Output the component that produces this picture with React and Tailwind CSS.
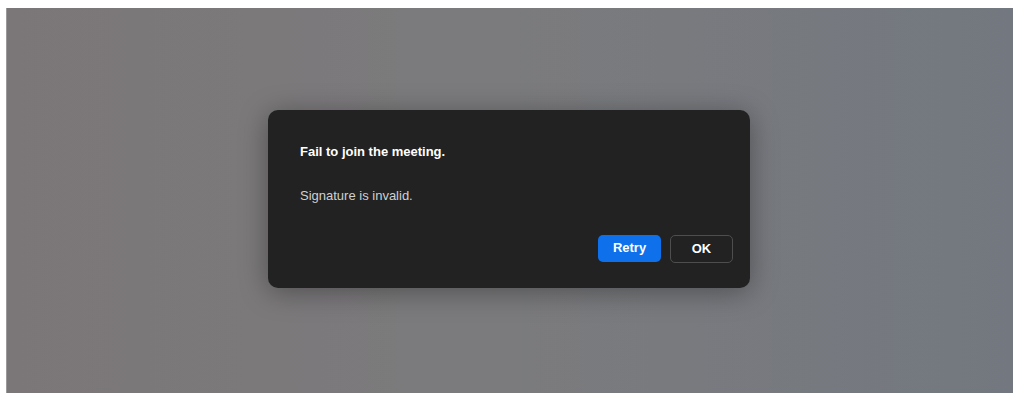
export default function App() {
  return (
    <div className="w-[1024px] h-[395px] bg-white pt-[8px] pl-[6px] pr-[11px] pb-[2px] font-['Liberation_Sans',Arial,sans-serif]">
      <div className="h-full border-l border-[#9a9a9a] bg-gradient-to-r from-[#7b7778] via-[#7b7b7d] to-[#737880] flex items-center justify-center">
        <div className="mb-[4px] mr-[2px] w-[482px] h-[178px] bg-[#222222] rounded-[10px] shadow-[0_4px_28px_rgba(0,0,0,0.35)] pt-[32px] pl-[32px] pr-[17px] pb-[25px] flex flex-col">
          <p className="text-[13px] leading-[20px] font-bold text-white">Fail to join the meeting.</p>
          <p className="mt-[24px] text-[13px] leading-[20px] text-[#d0d0d0]">Signature is invalid.</p>
          <div className="mt-auto flex justify-end gap-[9px]">
            <button className="w-[63px] h-[27px] rounded-[5px] bg-[#0e71eb] text-white text-[13px] font-bold">Retry</button>
            <button className="w-[63px] h-[28px] rounded-[5px] border border-[#4e4e4e] bg-[#222222] text-white text-[13px] font-bold">OK</button>
          </div>
        </div>
      </div>
    </div>
  );
}
